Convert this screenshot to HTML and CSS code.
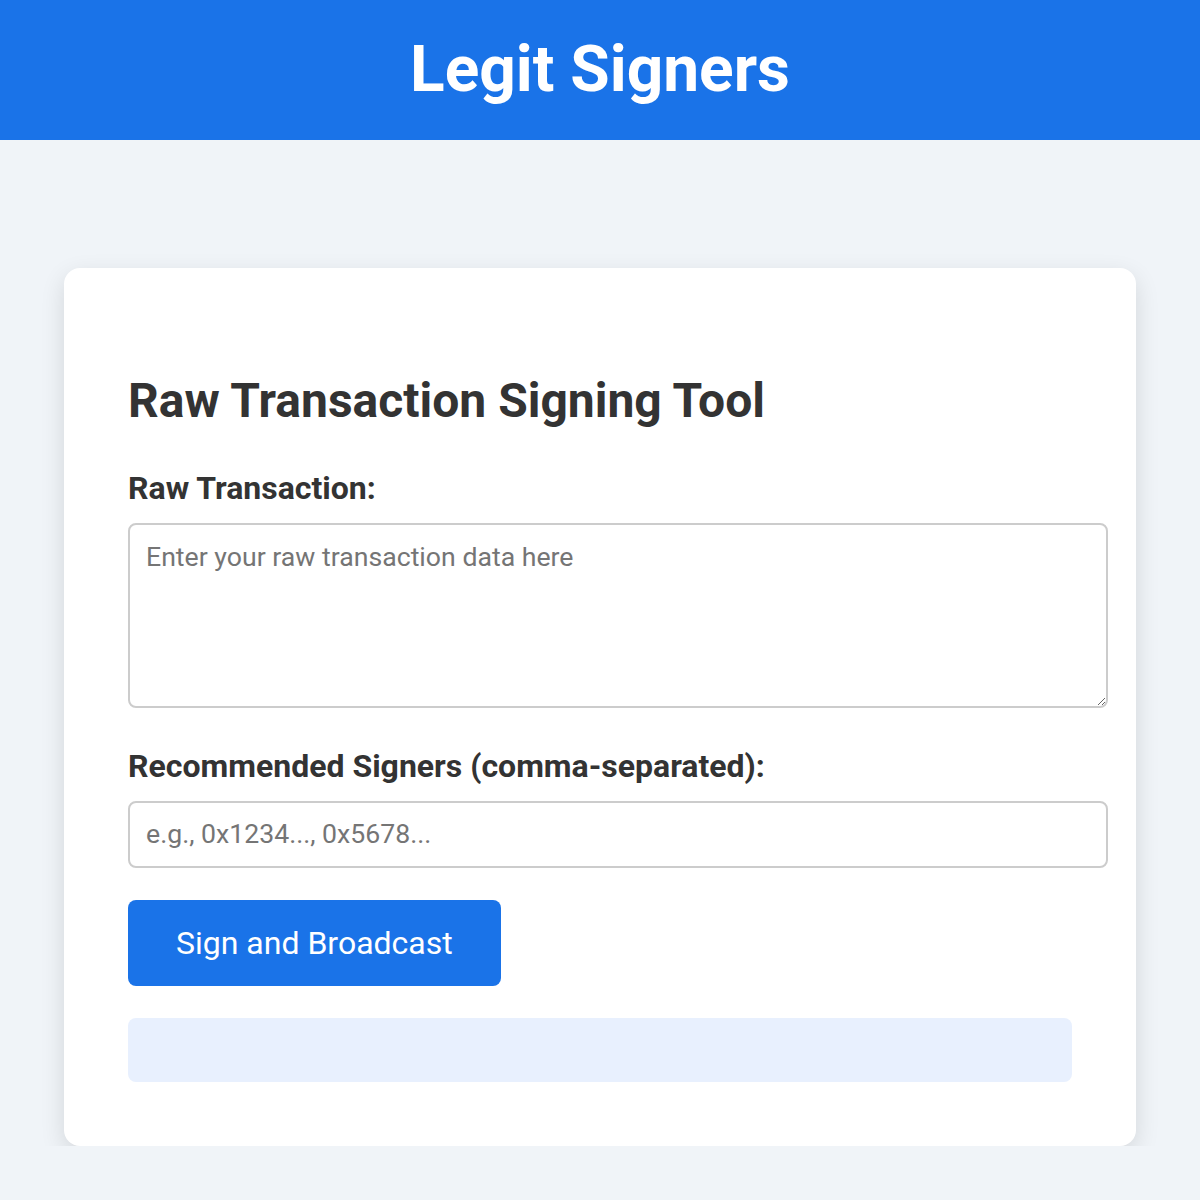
FILE: index.html
```html
<!DOCTYPE html>
<html lang="en">
  <head>
    <meta charset="UTF-8" />
    <meta name="viewport" content="width=device-width, initial-scale=1.0" />
    <title>Legit Signers</title>
    <link rel="stylesheet" href="styles.css">
  </head>
  <body>
    <!-- 顶部标题 -->
    <header class="header">
      <h1 class="title">Legit Signers</h1>
    </header>

    <!-- 主体卡片 -->
    <main class="container">
      <h2 class="tool-title">Raw Transaction Signing Tool</h2>

      <div class="form-group">
        <label class="label" for="rawTx">Raw Transaction:</label>
        <textarea class="field textarea" id="rawTx" placeholder="Enter your raw transaction data here"></textarea>
      </div>

      <div class="form-group">
        <label class="label" for="signers">Recommended Signers (comma-separated):</label>
        <input class="field input" id="signers" type="text" placeholder="e.g., 0x1234..., 0x5678..." />
      </div>

      <button class="btn">Sign and Broadcast</button>

      <!-- 结果区域 -->
      <div class="result"></div>
    </main>
  </body>
</html>
```

FILE: styles.css
```css
* {
  padding: 0;
  margin: 0;
}

body {
  font-family: Roboto, "Liberation Sans", sans-serif;
  color: #333;
  background-color: #f0f4f8;
}

.header {
  padding: 32px 0 33px;

  text-align: center;
  color: #fff;

  background-color: #1a73e8;
}

.header .title {
  font-size: 64px;
  font-weight: 700;
}

.container {
  width: 944px;
  margin: 128px auto 0;
  padding: 64px;
  border-radius: 16px;

  background-color: #fff;
  box-shadow: 0 8px 24px rgba(0, 0, 0, 0.12);
}

.container .tool-title {
  margin: 40px 0;

  font-size: 48px;
  font-weight: 700;
}

.form-group {
  display: flex;
  flex-direction: column;
  margin-bottom: 32px;
}

.form-group .label {
  margin-bottom: 16px;

  font-size: 32px;
  font-weight: 700;
}

.form-group .field {
  width: 100%;
  padding: 16px;
  border: 2px solid #ccc;
  border-radius: 8px;

  font-family: inherit;
  font-size: 26.67px;
  color: #333;
}

.form-group .field::placeholder {
  color: #757575;
}

.form-group .textarea {
  height: 149px;
  margin-bottom: 7px;
}

.form-group .input {
  line-height: 31px;
}

.btn {
  padding: 24px 48px;
  border: none;
  border-radius: 8px;

  font-family: inherit;
  font-size: 32px;
  color: #fff;

  background-color: #1a73e8;
  cursor: pointer;
}

.result {
  height: 64px;
  margin-top: 32px;
  border-radius: 8px;

  background-color: #e8f0fe;
}
```
